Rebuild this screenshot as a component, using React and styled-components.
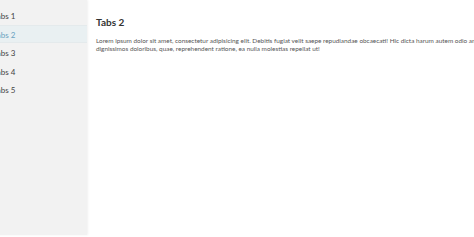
import { useState } from "react";
import styled, { createGlobalStyle } from "styled-components";

const GlobalStyle = createGlobalStyle`
  html, body {
    margin: 0;
    padding: 0;
    background: #ffffff;
    overflow: hidden;
  }
  body {
    font-family: Lato, "Noto Sans", sans-serif;
    color: #333333;
  }
`;

const tabs = ["Tabs 1", "Tabs 2", "Tabs 3", "Tabs 4", "Tabs 5"];
const text =
  "Lorem ipsum dolor sit amet, consectetur adipisicing elit. Debitis fugiat velit saepe repudiandae obcaecati! Hic dicta harum autem odio amet dignissimos doloribus, quae, reprehendent ratione, ea nulla molestias repellat ut!";

const App = () => {
  const [active, setActive] = useState(1);
  return (
    <Wrapper>
      <GlobalStyle />
      <Sidebar>
        {tabs.map((t, i) => (
          <Tab key={t} $active={active === i} onClick={() => setActive(i)}>
            {t}
          </Tab>
        ))}
      </Sidebar>
      <Content>
        <Title>{tabs[active]}</Title>
        <Text>{text}</Text>
      </Content>
    </Wrapper>
  );
};

const Wrapper = styled.div`
  display: flex;
  width: 520px;
  height: 237px;
`;

const Sidebar = styled.div`
  width: 100px;
  margin-left: -13px;
  height: 235px;
  padding-top: 6px;
  box-sizing: border-box;
  background-color: #f2f2f2;
  box-shadow: 1px 0 2px rgba(0, 0, 0, 0.06);
  display: flex;
  flex-direction: column;
`;

const Tab = styled.div`
  height: 18.6px;
  line-height: 18.6px;
  padding-left: 6px;
  font-size: 8px;
  cursor: pointer;
  color: ${(p) => (p.$active ? "#6aa3bf" : "#444444")};
  background-color: ${(p) => (p.$active ? "#e9f0f2" : "transparent")};
  border-top: 1px solid ${(p) => (p.$active ? "#e4eaec" : "transparent")};
  border-bottom: 1px solid ${(p) => (p.$active ? "#e4eaec" : "transparent")};
  box-sizing: border-box;
`;

const Content = styled.div`
  padding: 16px 0 0 9px;
  flex: 1;
`;

const Title = styled.h2`
  margin: 0 0 9px;
  font-size: 10px;
  font-weight: 700;
  color: #333333;
`;

const Text = styled.p`
  margin: 0;
  width: 420px;
  font-size: 6.4px;
  line-height: 8px;
  color: #555555;
`;

export default App;
